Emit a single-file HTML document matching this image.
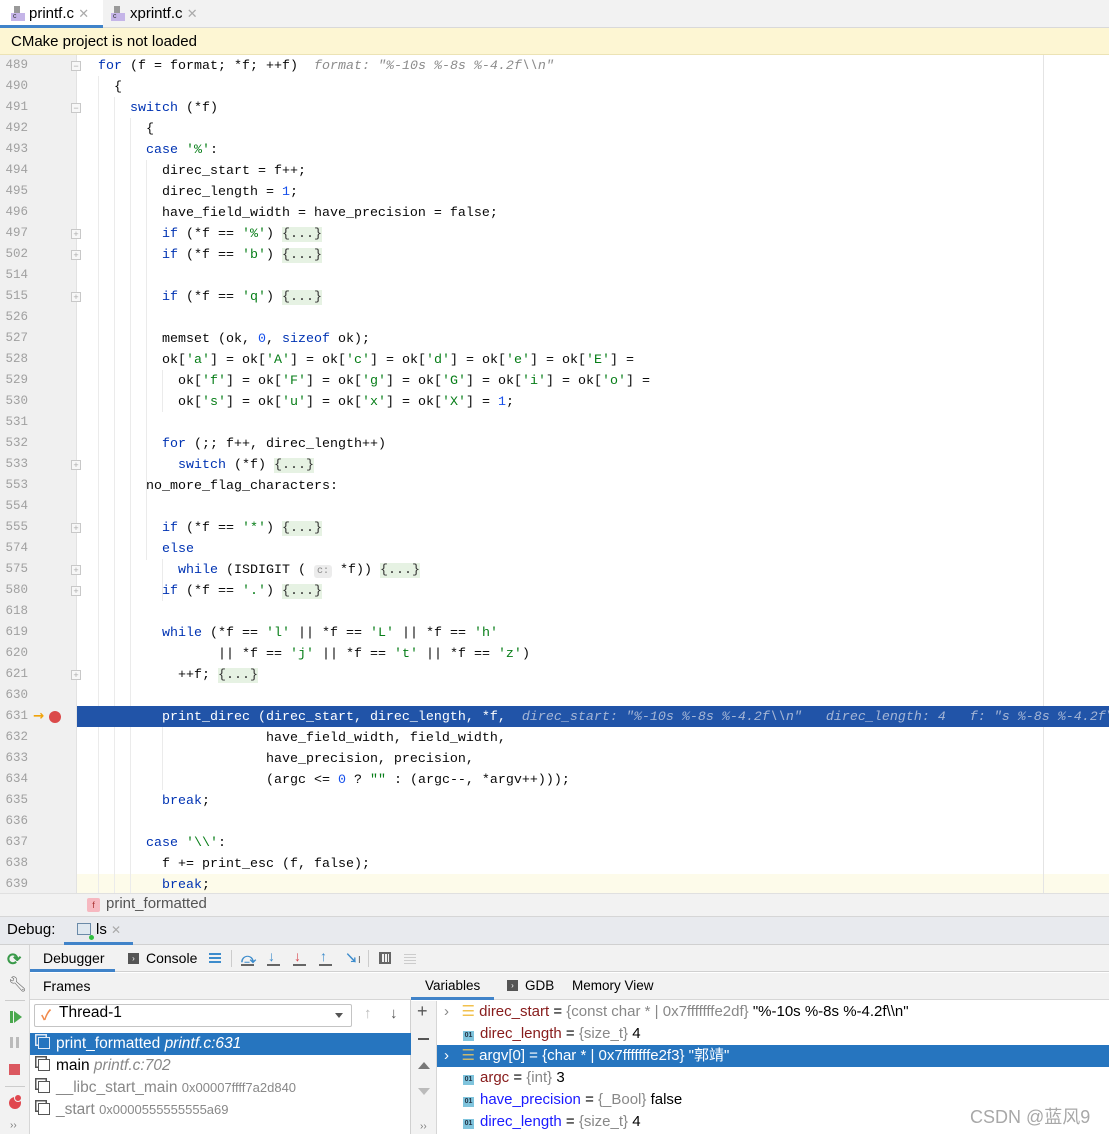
<!DOCTYPE html>
<html><head><meta charset="utf-8"><style>
*{margin:0;padding:0;box-sizing:border-box}
body{width:1109px;height:1134px;overflow:hidden;background:#fff;font-family:"Liberation Sans","Noto Sans CJK SC",sans-serif;position:relative;font-size:14px;color:#000}
.abs{position:absolute}
.code{font-family:"Liberation Mono",monospace;font-size:13.33px;white-space:pre;color:#080808}
.row{position:absolute;left:0;width:1109px;height:21px;line-height:21px}
.ln{position:absolute;left:0;width:28px;text-align:right;color:#a0a0a0;font-family:"Liberation Mono",monospace;font-size:12.5px}
.tx{position:absolute;left:98px;top:1px}
.k{color:#0033b3}.s{color:#067d17}.n{color:#1750eb}
.f{background:#e6f2e3;color:#333}
.h{color:#8c8c8c;font-style:italic}
.fm{position:absolute;left:71px;top:6px;width:10px;height:10px;border:1px solid #c8c8c8;background:#f7f7f7;font-size:9px;line-height:8px;text-align:center;color:#aaa;font-family:"Liberation Sans",sans-serif}
.g{position:absolute;width:1px;background:#ebebeb}
.ico01{display:inline-block;width:11px;height:10px;background:#7fc4dd;color:#234;font-size:7px;line-height:10px;text-align:center;vertical-align:1px;margin-right:6px;font-weight:bold}
.vr{position:absolute;left:437px;width:672px;height:22px;line-height:22px;font-size:15px;white-space:nowrap}
.gr{color:#888}
.fr{position:absolute;left:30px;width:381px;height:22px;line-height:22px;font-size:15.5px;white-space:nowrap;padding-left:8px}
.fic{display:inline-block;width:12px;height:12px;border:1.5px solid #555;margin-right:6px;vertical-align:-1px;box-shadow:-3px -3px 0 -1.5px #fff,-3px -3px 0 0 #555}
</style></head><body>

<div class="abs" style="left:0;top:0;width:1109px;height:28px;background:#f2f2f2;border-bottom:1px solid #d9d9d9"></div>
<div class="abs" style="left:0;top:0;width:103px;height:28px;background:#fff;border-bottom:3px solid #4083c9"></div>
<div class="abs" style="left:11px;top:6px;width:14px;height:15px"><div style="position:absolute;left:3px;top:0;width:6px;height:7px;background:#9a9a9a"></div><div style="position:absolute;left:0;top:7px;width:14px;height:8px;background:#c5b5e8;font-size:7px;line-height:8px;padding-left:2px;color:#333">c</div></div>
<div class="abs" style="left:29px;top:5px;font-size:15px">printf.c <span style="color:#aaa;font-size:13px">✕</span></div>
<div class="abs" style="left:111px;top:6px;width:14px;height:15px"><div style="position:absolute;left:3px;top:0;width:6px;height:7px;background:#9a9a9a"></div><div style="position:absolute;left:0;top:7px;width:14px;height:8px;background:#c5b5e8;font-size:7px;line-height:8px;padding-left:2px;color:#333">c</div></div>
<div class="abs" style="left:130px;top:5px;font-size:15px">xprintf.c <span style="color:#aaa;font-size:13px">✕</span></div>

<div class="abs" style="left:0;top:28px;width:1109px;height:27px;background:#fdf6d3;border-bottom:1px solid #ece3b5;font-size:15px;line-height:27px;padding-left:11px">CMake project is not loaded</div>

<div class="abs" style="left:0;top:55px;width:1109px;height:838px;overflow:hidden">
<div class="abs" style="left:77px;top:819px;width:1032px;height:21px;background:#fdfbea"></div>
<div class="abs" style="left:0;top:0;width:77px;height:838px;background:#f0f0f0;border-right:1px solid #e2e2e2"></div>
<div class="abs" style="left:1043px;top:0;width:1px;height:838px;background:#e4e4e4"></div>
<div class="g" style="left:98px;top:21px;height:817px"></div>
<div class="g" style="left:114px;top:42px;height:796px"></div>
<div class="g" style="left:130px;top:63px;height:775px"></div>
<div class="g" style="left:146px;top:105px;height:400px"></div>
<div class="g" style="left:162px;top:315px;height:42px"></div>
<div class="g" style="left:162px;top:504px;height:42px"></div>
<div class="g" style="left:162px;top:672px;height:63px"></div>
</div>

<div class="abs code" style="left:0;top:55px;width:1109px;height:838px;overflow:hidden">
<div class="row" style="top:0"><span class="ln">489</span><span class="fm">−</span><span class="tx"><span class="k">for</span> (f = format; *f; ++f)  <span class="h">format: "%-10s %-8s %-4.2f\\n"</span></span></div>
<div class="row" style="top:21px"><span class="ln">490</span><span class="tx">  {</span></div>
<div class="row" style="top:42px"><span class="ln">491</span><span class="fm">−</span><span class="tx">    <span class="k">switch</span> (*f)</span></div>
<div class="row" style="top:63px"><span class="ln">492</span><span class="tx">      {</span></div>
<div class="row" style="top:84px"><span class="ln">493</span><span class="tx">      <span class="k">case</span> <span class="s">'%'</span>:</span></div>
<div class="row" style="top:105px"><span class="ln">494</span><span class="tx">        direc_start = f++;</span></div>
<div class="row" style="top:126px"><span class="ln">495</span><span class="tx">        direc_length = <span class="n">1</span>;</span></div>
<div class="row" style="top:147px"><span class="ln">496</span><span class="tx">        have_field_width = have_precision = false;</span></div>
<div class="row" style="top:168px"><span class="ln">497</span><span class="fm">+</span><span class="tx">        <span class="k">if</span> (*f == <span class="s">'%'</span>) <span class="f">{...}</span></span></div>
<div class="row" style="top:189px"><span class="ln">502</span><span class="fm">+</span><span class="tx">        <span class="k">if</span> (*f == <span class="s">'b'</span>) <span class="f">{...}</span></span></div>
<div class="row" style="top:210px"><span class="ln">514</span></div>
<div class="row" style="top:231px"><span class="ln">515</span><span class="fm">+</span><span class="tx">        <span class="k">if</span> (*f == <span class="s">'q'</span>) <span class="f">{...}</span></span></div>
<div class="row" style="top:252px"><span class="ln">526</span></div>
<div class="row" style="top:273px"><span class="ln">527</span><span class="tx">        memset (ok, <span class="n">0</span>, <span class="k">sizeof</span> ok);</span></div>
<div class="row" style="top:294px"><span class="ln">528</span><span class="tx">        ok[<span class="s">'a'</span>] = ok[<span class="s">'A'</span>] = ok[<span class="s">'c'</span>] = ok[<span class="s">'d'</span>] = ok[<span class="s">'e'</span>] = ok[<span class="s">'E'</span>] =</span></div>
<div class="row" style="top:315px"><span class="ln">529</span><span class="tx">          ok[<span class="s">'f'</span>] = ok[<span class="s">'F'</span>] = ok[<span class="s">'g'</span>] = ok[<span class="s">'G'</span>] = ok[<span class="s">'i'</span>] = ok[<span class="s">'o'</span>] =</span></div>
<div class="row" style="top:336px"><span class="ln">530</span><span class="tx">          ok[<span class="s">'s'</span>] = ok[<span class="s">'u'</span>] = ok[<span class="s">'x'</span>] = ok[<span class="s">'X'</span>] = <span class="n">1</span>;</span></div>
<div class="row" style="top:357px"><span class="ln">531</span></div>
<div class="row" style="top:378px"><span class="ln">532</span><span class="tx">        <span class="k">for</span> (;; f++, direc_length++)</span></div>
<div class="row" style="top:399px"><span class="ln">533</span><span class="fm">+</span><span class="tx">          <span class="k">switch</span> (*f) <span class="f">{...}</span></span></div>
<div class="row" style="top:420px"><span class="ln">553</span><span class="tx">      no_more_flag_characters:</span></div>
<div class="row" style="top:441px"><span class="ln">554</span></div>
<div class="row" style="top:462px"><span class="ln">555</span><span class="fm">+</span><span class="tx">        <span class="k">if</span> (*f == <span class="s">'*'</span>) <span class="f">{...}</span></span></div>
<div class="row" style="top:483px"><span class="ln">574</span><span class="tx">        <span class="k">else</span></span></div>
<div class="row" style="top:504px"><span class="ln">575</span><span class="fm">+</span><span class="tx">          <span class="k">while</span> (ISDIGIT ( <span style="background:#ececec;color:#888;font-size:10px;border-radius:3px;padding:1px 3px">c:</span> *f)) <span class="f">{...}</span></span></div>
<div class="row" style="top:525px"><span class="ln">580</span><span class="fm">+</span><span class="tx">        <span class="k">if</span> (*f == <span class="s">'.'</span>) <span class="f">{...}</span></span></div>
<div class="row" style="top:546px"><span class="ln">618</span></div>
<div class="row" style="top:567px"><span class="ln">619</span><span class="tx">        <span class="k">while</span> (*f == <span class="s">'l'</span> || *f == <span class="s">'L'</span> || *f == <span class="s">'h'</span></span></div>
<div class="row" style="top:588px"><span class="ln">620</span><span class="tx">               || *f == <span class="s">'j'</span> || *f == <span class="s">'t'</span> || *f == <span class="s">'z'</span>)</span></div>
<div class="row" style="top:609px"><span class="ln">621</span><span class="fm">+</span><span class="tx">          ++f; <span class="f">{...}</span></span></div>
<div class="row" style="top:630px"><span class="ln">630</span></div>
<div class="row" style="top:651px"><div class="abs" style="left:77px;top:0;width:1032px;height:21px;background:#2154a8"></div><span class="ln">631</span><span class="abs" style="left:33px;color:#f0a30a;font-weight:bold;font-family:'DejaVu Sans'">→</span><span class="abs" style="left:49px;top:5px;width:12px;height:12px;border-radius:6px;background:#db4a4a"></span><span class="tx" style="color:#fff">        print_direc (direc_start, direc_length, *f,  <span style="color:#a5b6d6;font-style:italic">direc_start: "%-10s %-8s %-4.2f\\n"   direc_length: 4   f: "s %-8s %-4.2f\\n"</span></span></div>
<div class="row" style="top:672px"><span class="ln">632</span><span class="tx">                     have_field_width, field_width,</span></div>
<div class="row" style="top:693px"><span class="ln">633</span><span class="tx">                     have_precision, precision,</span></div>
<div class="row" style="top:714px"><span class="ln">634</span><span class="tx">                     (argc &lt;= <span class="n">0</span> ? <span class="s">""</span> : (argc--, *argv++)));</span></div>
<div class="row" style="top:735px"><span class="ln">635</span><span class="tx">        <span class="k">break</span>;</span></div>
<div class="row" style="top:756px"><span class="ln">636</span></div>
<div class="row" style="top:777px"><span class="ln">637</span><span class="tx">      <span class="k">case</span> <span class="s">'\\'</span>:</span></div>
<div class="row" style="top:798px"><span class="ln">638</span><span class="tx">        f += print_esc (f, false);</span></div>
<div class="row" style="top:819px"><span class="ln">639</span><span class="tx">        <span class="k">break</span>;</span></div>
</div>

<div class="abs" style="left:0;top:893px;width:1109px;height:24px;background:#f2f2f2;border-top:1px solid #e0e0e0;border-bottom:1px solid #d6d6d6"></div>
<div class="abs" style="left:87px;top:898px;width:13px;height:14px;background:#f6b8c0;border-radius:2px;font-size:9px;line-height:14px;text-align:center;color:#a33">f</div>
<div class="abs" style="left:106px;top:895px;font-size:15px;color:#555">print_formatted</div>

<div class="abs" style="left:0;top:917px;width:1109px;height:28px;background:#e8eaee;border-bottom:1px solid #d0d0d0"></div>
<div class="abs" style="left:7px;top:921px;font-size:15px">Debug:</div>
<div class="abs" style="left:64px;top:942px;width:69px;height:3px;background:#4083c9"></div>
<div class="abs" style="left:77px;top:923px;width:14px;height:12px;border:1.5px solid #6a8aa8;background:#dfe8f0"></div>
<div class="abs" style="left:89px;top:935px;width:5px;height:5px;border-radius:3px;background:#2fbf3f"></div>
<div class="abs" style="left:96px;top:921px;font-size:15px">ls <span style="color:#aaa;font-size:12px">✕</span></div>

<div class="abs" style="left:0;top:945px;width:30px;height:189px;background:#f2f2f2;border-right:1px solid #d6d6d6"></div>
<div class="abs" style="left:7px;top:950px;color:#3a9a4a;font-size:17px;font-weight:bold">⟳</div>
<div class="abs" style="left:8px;top:975px;color:#666;font-size:15px">🔧︎</div>
<div class="abs" style="left:5px;top:1000px;width:20px;height:1px;background:#ccc"></div>
<div class="abs" style="left:10px;top:1011px;width:3px;height:12px;background:#4aa84e"></div>
<div class="abs" style="left:14px;top:1011px;width:0;height:0;border-left:8px solid #4aa84e;border-top:6px solid transparent;border-bottom:6px solid transparent"></div>
<div class="abs" style="left:10px;top:1037px;width:3px;height:11px;background:#bbb"></div>
<div class="abs" style="left:16px;top:1037px;width:3px;height:11px;background:#bbb"></div>
<div class="abs" style="left:9px;top:1064px;width:11px;height:11px;background:#db5860"></div>
<div class="abs" style="left:5px;top:1086px;width:20px;height:1px;background:#ccc"></div>
<div class="abs" style="left:9px;top:1097px;width:12px;height:12px;border-radius:6px;background:#e0474f"></div>
<div class="abs" style="left:14px;top:1094px;width:8px;height:8px;border-radius:4px;background:#e0474f;border:1px solid #f2f2f2"></div>
<div class="abs" style="left:10px;top:1120px;color:#777;font-size:10px">››</div>

<div class="abs" style="left:30px;top:945px;width:1079px;height:27px;background:#f2f2f2;border-bottom:1px solid #d0d0d0"></div>
<div class="abs" style="left:30px;top:969px;width:85px;height:3px;background:#4083c9"></div>
<div class="abs" style="left:43px;top:950px;font-size:14px">Debugger</div>
<div class="abs" style="left:128px;top:953px;width:11px;height:11px;background:#555;color:#fff;font-size:8px;line-height:11px;text-align:center">›</div>
<div class="abs" style="left:146px;top:950px;font-size:14px">Console</div>
<div class="abs" style="left:209px;top:953px;width:12px;height:2px;background:#3d8ccc;box-shadow:0 4px 0 #3d8ccc,0 8px 0 #3d8ccc"></div>
<div class="abs" style="left:231px;top:950px;width:1px;height:17px;background:#ccc"></div>
<div class="abs" style="left:241px;top:950px;color:#3d8ccc;font-size:14px;font-weight:bold">⤼</div>
<div class="abs" style="left:241px;top:964px;width:13px;height:2px;background:#666"></div>
<div class="abs" style="left:268px;top:948px;color:#3d8ccc;font-size:14px;font-weight:bold">↓</div>
<div class="abs" style="left:267px;top:964px;width:13px;height:2px;background:#666"></div>
<div class="abs" style="left:294px;top:948px;color:#d9454d;font-size:14px;font-weight:bold">↓</div>
<div class="abs" style="left:293px;top:964px;width:13px;height:2px;background:#666"></div>
<div class="abs" style="left:320px;top:948px;color:#3d8ccc;font-size:14px;font-weight:bold">↑</div>
<div class="abs" style="left:319px;top:964px;width:13px;height:2px;background:#666"></div>
<div class="abs" style="left:345px;top:948px;color:#3d8ccc;font-size:13px;font-weight:bold">↘<span style="color:#666;font-size:10px;font-weight:normal">I</span></div>
<div class="abs" style="left:368px;top:950px;width:1px;height:17px;background:#ccc"></div>
<div class="abs" style="left:379px;top:952px;width:12px;height:12px;border:2px solid #666;background:repeating-linear-gradient(90deg,#666 0 1px,#f2f2f2 1px 3px)"></div>
<div class="abs" style="left:404px;top:952px;width:12px;height:12px;background:repeating-linear-gradient(0deg,#ccc 0 1px,#f2f2f2 1px 3px)"></div>

<div class="abs" style="left:30px;top:973px;width:381px;height:161px;background:#fff;border-right:1px solid #d0d0d0"></div>
<div class="abs" style="left:30px;top:973px;width:381px;height:27px;background:#f2f2f2;border-bottom:1px solid #d6d6d6;font-size:14px;line-height:27px;padding-left:13px">Frames</div>
<div class="abs" style="left:34px;top:1004px;width:318px;height:23px;border:1px solid #c4c4c4;border-radius:2px;background:#fff"></div>
<div class="abs" style="left:41px;top:1005px;color:#f08a4b;font-size:14px;font-weight:bold">✓</div>
<div class="abs" style="left:59px;top:1004px;font-size:15.5px">Thread-1</div>
<div class="abs" style="left:335px;top:1013px;border-top:5px solid #555;border-left:4px solid transparent;border-right:4px solid transparent"></div>
<div class="abs" style="left:364px;top:1005px;color:#bbb;font-size:15px">↑</div>
<div class="abs" style="left:390px;top:1005px;color:#555;font-size:15px">↓</div>
<div class="fr" style="top:1033px;background:#2675bf;color:#fff"><span class="fic" style="border-color:#dfe9f5;box-shadow:-3px -3px 0 -1.5px #2675bf,-3px -3px 0 0 #dfe9f5"></span>print_formatted <i>printf.c:631</i></div>
<div class="fr" style="top:1055px"><span class="fic"></span>main <i class="gr">printf.c:702</i></div>
<div class="fr" style="top:1077px;color:#888"><span class="fic"></span>__libc_start_main <span style="font-size:13px">0x00007ffff7a2d840</span></div>
<div class="fr" style="top:1099px;color:#888"><span class="fic"></span>_start <span style="font-size:13px">0x0000555555555a69</span></div>

<div class="abs" style="left:411px;top:973px;width:698px;height:27px;background:#f2f2f2;border-bottom:1px solid #d6d6d6"></div>
<div class="abs" style="left:411px;top:997px;width:83px;height:3px;background:#4083c9"></div>
<div class="abs" style="left:425px;top:978px;font-size:13.5px">Variables</div>
<div class="abs" style="left:507px;top:980px;width:11px;height:11px;background:#555;color:#fff;font-size:8px;line-height:11px;text-align:center">›</div>
<div class="abs" style="left:525px;top:978px;font-size:13.5px">GDB</div>
<div class="abs" style="left:572px;top:978px;font-size:13.5px">Memory View</div>
<div class="abs" style="left:411px;top:1001px;width:26px;height:133px;background:#f2f2f2;border-right:1px solid #d6d6d6"></div>
<div class="abs" style="left:417px;top:1001px;color:#555;font-size:18px">+</div>
<div class="abs" style="left:418px;top:1038px;width:11px;height:2px;background:#555"></div>
<div class="abs" style="left:418px;top:1062px;border-bottom:7px solid #777;border-left:6px solid transparent;border-right:6px solid transparent"></div>
<div class="abs" style="left:418px;top:1088px;border-top:7px solid #bbb;border-left:6px solid transparent;border-right:6px solid transparent"></div>
<div class="abs" style="left:420px;top:1121px;color:#777;font-size:10px">››</div>

<div class="vr" style="top:1001px"><span class="gr" style="padding-left:7px">›</span>&nbsp;&nbsp;&nbsp;<span style="color:#f2c14e">☰</span> <span style="color:#871b1b">direc_start</span> = <span class="gr">{const char * | 0x7fffffffe2df}</span> "%-10s %-8s %-4.2f\\n"</div>
<div class="vr" style="top:1023px;padding-left:26px"><span class="ico01">01</span><span style="color:#871b1b">direc_length</span> = <span class="gr">{size_t}</span> 4</div>
<div class="vr" style="top:1045px;background:#2675bf;color:#fff"><span style="padding-left:7px">›</span>&nbsp;&nbsp;&nbsp;<span style="color:#c8b870">☰</span> argv[0] = {char * | 0x7fffffffe2f3} "郭靖"</div>
<div class="vr" style="top:1067px;padding-left:26px"><span class="ico01">01</span><span style="color:#871b1b">argc</span> = <span class="gr">{int}</span> 3</div>
<div class="vr" style="top:1089px;padding-left:26px"><span class="ico01">01</span><span style="color:#1a1aff">have_precision</span> = <span class="gr">{_Bool}</span> false</div>
<div class="vr" style="top:1111px;padding-left:26px"><span class="ico01">01</span><span style="color:#1a1aff">direc_length</span> = <span class="gr">{size_t}</span> 4</div>
<div class="abs" style="left:970px;top:1103px;font-size:18px;color:#a8a8a8">CSDN @蓝风9</div>
</body></html>
